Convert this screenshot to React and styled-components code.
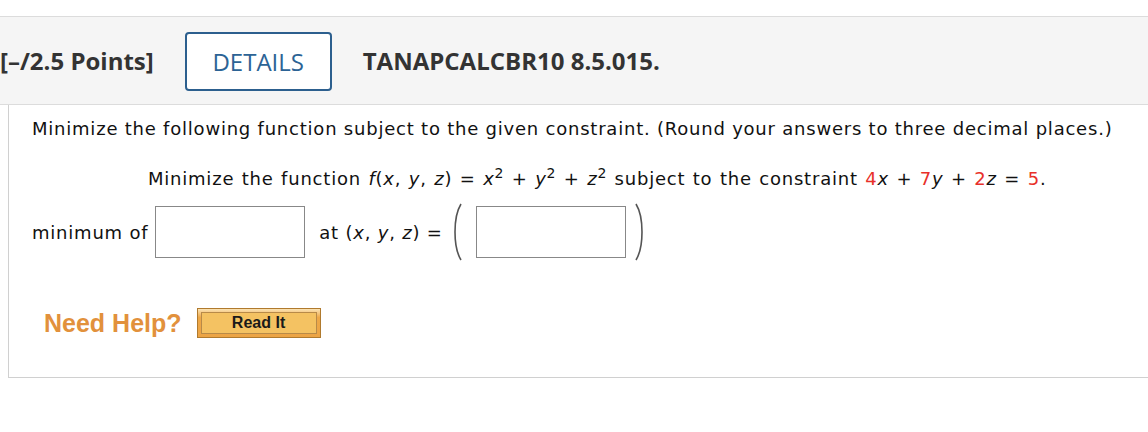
import React from 'react'
import styled, { createGlobalStyle } from 'styled-components'

const GlobalStyle = createGlobalStyle`
  html, body {
    margin: 0;
    padding: 0;
    background: #fff;
  }
`

function Paren({ flip }) {
  return (
    <ParenSvg viewBox="0 0 12 58" flip={flip ? 1 : 0}>
      <path d="M10 1 C2 14, 2 44, 10 57" fill="none" stroke="#555" strokeWidth="1.6" />
    </ParenSvg>
  )
}

function App() {
  return (
    <Page>
      <GlobalStyle />
      <Header>
        <Points>[–/2.5 Points]</Points>
        <DetailsButton>DETAILS</DetailsButton>
        <Code>TANAPCALCBR10 8.5.015.</Code>
      </Header>
      <Body>
        <Prompt>
          Minimize the following function subject to the given constraint. (Round your answers to three decimal places.)
        </Prompt>
        <Problem>
          Minimize the function <I>f</I>(<I>x</I>, <I>y</I>, <I>z</I>) = <I>x</I><sup>2</sup> + <I>y</I><sup>2</sup> + <I>z</I><sup>2</sup> subject to the constraint{' '}
          <Red>4</Red><I>x</I> + <Red>7</Red><I>y</I> + <Red>2</Red><I>z</I> = <Red>5</Red>.
        </Problem>
        <AnswerRow>
          <span>minimum of</span>
          <AnswerBox />
          <AtLabel>
            at (<I>x</I>, <I>y</I>, <I>z</I>) =
          </AtLabel>
          <Paren />
          <AnswerBox />
          <Paren flip />
        </AnswerRow>
        <HelpRow>
          <NeedHelp>Need Help?</NeedHelp>
          <ReadIt>
            <span>Read It</span>
          </ReadIt>
        </HelpRow>
      </Body>
    </Page>
  )
}

export default App

const Page = styled.div`
  padding-top: 16px;
  width: 1148px;
  height: 432px;
  box-sizing: border-box;
  overflow: hidden;
`

const Header = styled.div`
  display: flex;
  align-items: center;
  height: 87px;
  background: #f5f5f5;
  border-top: 1px solid #dcdcdc;
  border-bottom: 1px solid #dcdcdc;
  font-family: "Open Sans", sans-serif;
  font-size: 24px;
  color: #333;
`

const Points = styled.span`
  font-weight: 700;
  margin-left: 0px;
`

const DetailsButton = styled.div`
  margin-left: 31px;
  width: 143px;
  height: 55px;
  border: 2px solid #2c5f8e;
  border-radius: 4px;
  display: flex;
  align-items: center;
  justify-content: center;
  color: #2c6395;
  background: #fff;
  margin-top: 2px;
`

const Code = styled.span`
  font-weight: 700;
  margin-left: 31px;
`

const Body = styled.div`
  margin-left: 8px;
  height: 260px;
  border-left: 1px solid #d0d0d0;
  border-bottom: 1px solid #d0d0d0;
  padding: 12px 0 0 23px;
  font-family: "DejaVu Sans", Verdana, sans-serif;
  font-size: 18px;
  letter-spacing: 0.78px;
  color: #111;

  sup {
    font-size: 14px;
    line-height: 0;
    vertical-align: 0.5em;
  }
`

const Prompt = styled.div`
  line-height: 24px;
  white-space: nowrap;
`

const Problem = styled.div`
  margin-top: 26px;
  margin-left: 116px;
  line-height: 24px;
  white-space: nowrap;
  word-spacing: 1px;
`

const I = styled.i`
  font-style: italic;
`

const Red = styled.span`
  color: #e8302a;
`

const AnswerRow = styled.div`
  display: flex;
  align-items: center;
  margin-top: 11px;
  height: 60px;
`

const AnswerBox = styled.div`
  width: 148px;
  height: 50px;
  border: 1px solid #888;
  margin-left: 7px;
  background: #fff;
`

const AtLabel = styled.span`
  margin-left: 14px;
`

const ParenSvg = styled.svg`
  width: 12px;
  height: 58px;
  margin: 0 6px 0 8px;
  transform: ${p => (p.flip ? 'scaleX(-1)' : 'none')};
`

const HelpRow = styled.div`
  display: flex;
  align-items: center;
  margin-top: 46px;
  margin-left: 12px;
`

const NeedHelp = styled.span`
  font-family: "Liberation Sans", Arial, sans-serif;
  font-weight: 700;
  font-size: 25px;
  letter-spacing: 0;
  color: #e2913c;
`

const ReadIt = styled.div`
  margin-left: 15px;
  border: 1px solid #b07a2e;
  background: linear-gradient(#fbe3b4, #eea848 30%, #eca445);
  padding: 3px;
  box-sizing: border-box;
  width: 124px;
  height: 30px;

  span {
    display: flex;
    align-items: center;
    justify-content: center;
    height: 100%;
    border: 1px solid #b88a48;
    background: #f4c262;
    font-family: "Liberation Sans", Arial, sans-serif;
    font-weight: 700;
    font-size: 16px;
    letter-spacing: 0;
    color: #1a1a1a;
    box-sizing: border-box;
  }
`
